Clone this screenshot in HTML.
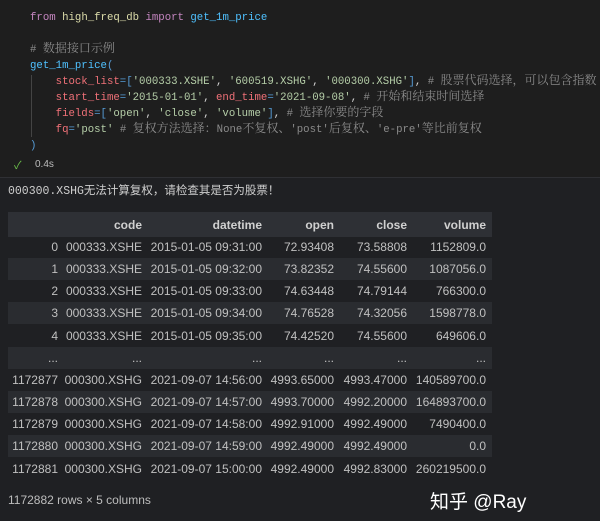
<!DOCTYPE html>
<html><head><meta charset="utf-8"><style>
body{margin:0;width:600px;height:521px;background:#1f2023;overflow:hidden;position:relative;font-family:"Liberation Sans","Noto Sans CJK SC",sans-serif}
.cell{position:absolute;left:0;top:0;width:600px;height:177px;background:#1e1e1e;border-bottom:1px solid #2f3034;overflow:hidden}
.code{position:absolute;left:30px;top:10px;font-family:"Liberation Mono","Noto Sans CJK SC",monospace;font-size:10.7px;color:#d4d4d4;white-space:pre}
.code div{height:16px;line-height:16px;overflow:visible}
.k{color:#c586c0}.f{color:#dcdcaa}.n{color:#4fc1ff}.par{color:#569cd6}.kw{color:#f07178}.str{color:#b5cea8}.cm{color:#8a8a8a}
.z{font-size:12px;line-height:10px;font-family:"Noto Serif CJK SC","Noto Sans CJK SC",serif}
.vline{position:absolute;left:31px;top:75px;width:1px;height:62px;background:#444}
.msg{position:absolute;left:8px;top:182px;font-family:"Liberation Mono","Noto Sans CJK SC",monospace;font-size:11.5px;color:#cfcfcf}
.row{position:absolute;left:8px;width:484px;height:22px;font-size:12px;color:#c0c0c0}
.row span{position:absolute;top:4px;text-align:right;white-space:nowrap}
.hd{background:#2e3035;font-weight:bold;color:#d0d0d0;height:25px}
.hd span{top:6px}
.st{background:#2a2c30}
</style></head><body>
<div class="cell">
<div class="code"><div><span class="k">from</span> <span class="f">high_freq_db</span> <span class="k">import</span> <span class="n">get_1m_price</span></div><div> </div><div><span class="cm"># <span class="z">数据接口示例</span></span></div><div><span class="n">get_1m_price</span><span class="par">(</span></div><div>    <span class="kw">stock_list</span><span class="par">=[</span><span class="str">'000333.XSHE'</span>, <span class="str">'600519.XSHG'</span>, <span class="str">'000300.XSHG'</span><span class="par">]</span>, <span class="cm"># <span class="z">股票代码选择，可以包含指数</span></span></div><div>    <span class="kw">start_time</span><span class="par">=</span><span class="str">'2015-01-01'</span>, <span class="kw">end_time</span><span class="par">=</span><span class="str">'2021-09-08'</span>, <span class="cm"># <span class="z">开始和结束时间选择</span></span></div><div>    <span class="kw">fields</span><span class="par">=[</span><span class="str">'open'</span>, <span class="str">'close'</span>, <span class="str">'volume'</span><span class="par">]</span>, <span class="cm"># <span class="z">选择你要的字段</span></span></div><div>    <span class="kw">fq</span><span class="par">=</span><span class="str">'post'</span> <span class="cm"># <span class="z">复权方法选择：</span>None<span class="z">不复权、</span>'post'<span class="z">后复权、</span>'e-pre'<span class="z">等比前复权</span></span></div><div><span class="par">)</span></div></div>
<div class="vline"></div>
<div style="position:absolute;left:14px;top:157px;color:#6cc04a;font-size:11px">✓</div>
<div style="position:absolute;left:35px;top:159px;color:#bbb;font-size:10px">0.4s</div>
</div>
<div class="msg">000300.XSHG无法计算复权，请检查其是否为股票！</div>

<div class="row hd" style="top:212px"><span style="right:350px">code</span><span style="right:230px">datetime</span><span style="right:158px">open</span><span style="right:85px">close</span><span style="right:6px">volume</span></div>

<div class="row" style="top:236px"><span style="right:434px">0</span><span style="right:350px">000333.XSHE</span><span style="right:230px">2015-01-05 09:31:00</span><span style="right:158px">72.93408</span><span style="right:85px">73.58808</span><span style="right:6px">1152809.0</span></div>
<div class="row st" style="top:258px"><span style="right:434px">1</span><span style="right:350px">000333.XSHE</span><span style="right:230px">2015-01-05 09:32:00</span><span style="right:158px">73.82352</span><span style="right:85px">74.55600</span><span style="right:6px">1087056.0</span></div>
<div class="row" style="top:280px"><span style="right:434px">2</span><span style="right:350px">000333.XSHE</span><span style="right:230px">2015-01-05 09:33:00</span><span style="right:158px">74.63448</span><span style="right:85px">74.79144</span><span style="right:6px">766300.0</span></div>
<div class="row st" style="top:302px"><span style="right:434px">3</span><span style="right:350px">000333.XSHE</span><span style="right:230px">2015-01-05 09:34:00</span><span style="right:158px">74.76528</span><span style="right:85px">74.32056</span><span style="right:6px">1598778.0</span></div>
<div class="row" style="top:325px"><span style="right:434px">4</span><span style="right:350px">000333.XSHE</span><span style="right:230px">2015-01-05 09:35:00</span><span style="right:158px">74.42520</span><span style="right:85px">74.55600</span><span style="right:6px">649606.0</span></div>
<div class="row st" style="top:347px"><span style="right:434px">...</span><span style="right:350px">...</span><span style="right:230px">...</span><span style="right:158px">...</span><span style="right:85px">...</span><span style="right:6px">...</span></div>
<div class="row" style="top:369px"><span style="right:434px">1172877</span><span style="right:350px">000300.XSHG</span><span style="right:230px">2021-09-07 14:56:00</span><span style="right:158px">4993.65000</span><span style="right:85px">4993.47000</span><span style="right:6px">140589700.0</span></div>
<div class="row st" style="top:391px"><span style="right:434px">1172878</span><span style="right:350px">000300.XSHG</span><span style="right:230px">2021-09-07 14:57:00</span><span style="right:158px">4993.70000</span><span style="right:85px">4992.20000</span><span style="right:6px">164893700.0</span></div>
<div class="row" style="top:413px"><span style="right:434px">1172879</span><span style="right:350px">000300.XSHG</span><span style="right:230px">2021-09-07 14:58:00</span><span style="right:158px">4992.91000</span><span style="right:85px">4992.49000</span><span style="right:6px">7490400.0</span></div>
<div class="row st" style="top:435px"><span style="right:434px">1172880</span><span style="right:350px">000300.XSHG</span><span style="right:230px">2021-09-07 14:59:00</span><span style="right:158px">4992.49000</span><span style="right:85px">4992.49000</span><span style="right:6px">0.0</span></div>
<div class="row" style="top:458px"><span style="right:434px">1172881</span><span style="right:350px">000300.XSHG</span><span style="right:230px">2021-09-07 15:00:00</span><span style="right:158px">4992.49000</span><span style="right:85px">4992.83000</span><span style="right:6px">260219500.0</span></div>

<div style="position:absolute;left:8px;top:493px;font-size:12px;color:#bdbdbd">1172882 rows × 5 columns</div>
<div style="position:absolute;left:430px;top:487px;font-size:19px;color:#fff">知乎 @Ray</div>
</body></html>
